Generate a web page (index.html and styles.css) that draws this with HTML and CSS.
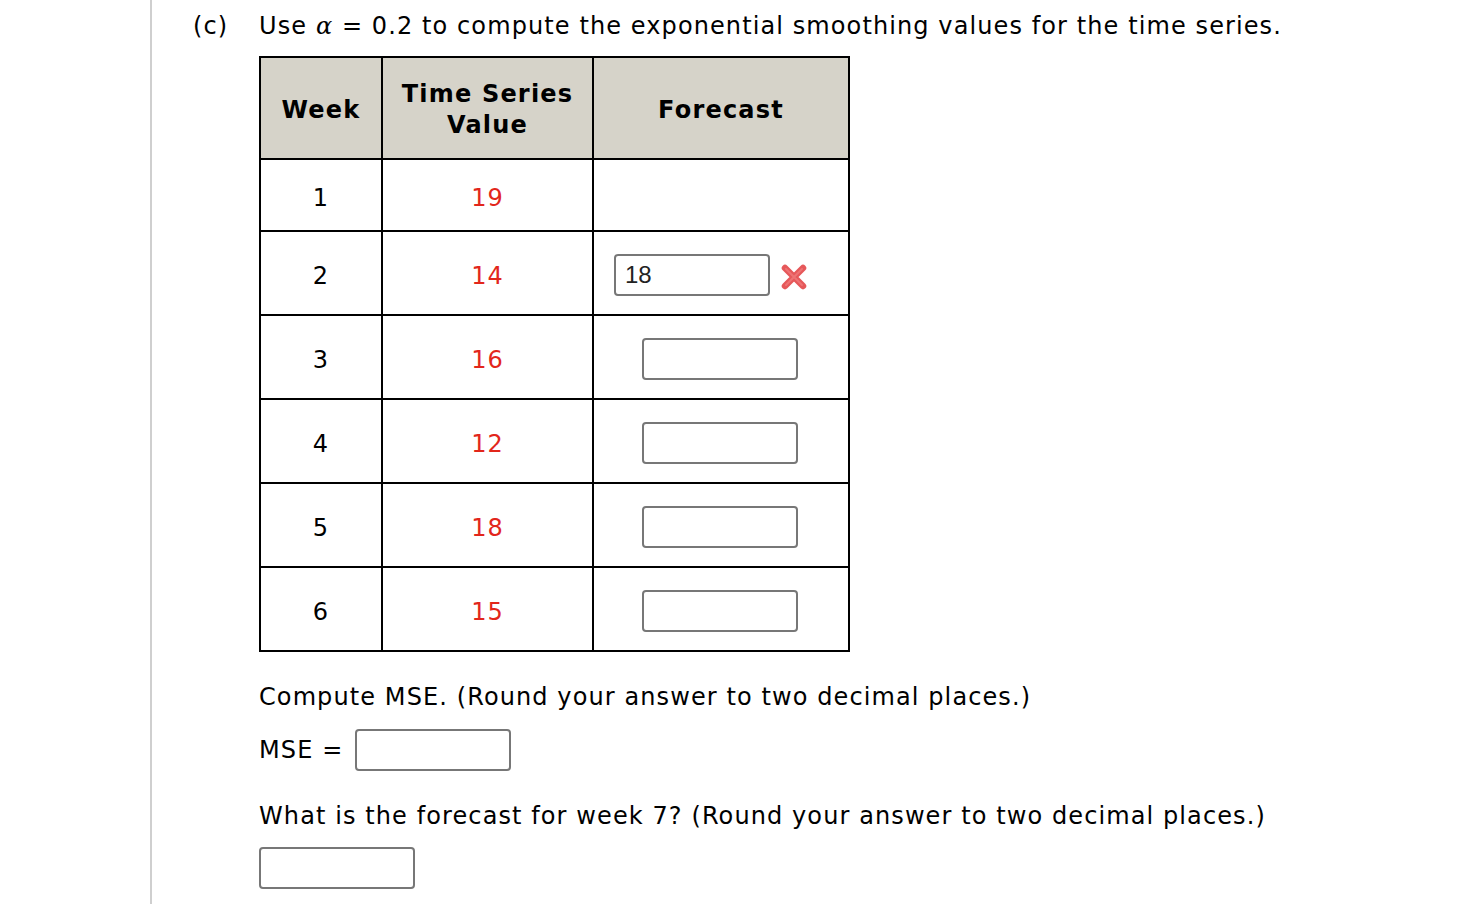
FILE: index.html
```html
<!DOCTYPE html>
<html>
<head>
<meta charset="utf-8">
<link rel="stylesheet" href="styles.css">
</head>
<body>
<div class="page">
  <div class="part">
    <div class="label">(c)</div>
    <div class="body">
      <p class="intro">Use <span class="alpha">α</span> = 0.2 to compute the exponential smoothing values for the time series.</p>
      <table class="grid">
        <tr class="head">
          <th class="c1">Week</th>
          <th class="c2">Time Series<br>Value</th>
          <th class="c3">Forecast</th>
        </tr>
        <tr class="first"><td class="num">1</td><td class="num val">19</td><td></td></tr>
        <tr><td class="num">2</td><td class="num val">14</td><td class="fc"><div class="answered"><span class="box filled">18</span><svg class="wrong" width="30" height="30" viewBox="0 0 30 30"><path d="M6 6 L24 24 M24 6 L6 24" stroke="#e6585a" stroke-width="6.5" stroke-linecap="round"/><path d="M7 7 L23 23 M23 7 L7 23" stroke="#ee7374" stroke-width="2" stroke-linecap="round"/></svg></div></td></tr>
        <tr><td class="num">3</td><td class="num val">16</td><td class="fc"><span class="box"></span></td></tr>
        <tr><td class="num">4</td><td class="num val">12</td><td class="fc"><span class="box"></span></td></tr>
        <tr><td class="num">5</td><td class="num val">18</td><td class="fc"><span class="box"></span></td></tr>
        <tr><td class="num">6</td><td class="num val">15</td><td class="fc"><span class="box"></span></td></tr>
      </table>
      <p class="q mse-q">Compute MSE. (Round your answer to two decimal places.)</p>
      <div class="mse">MSE = <span class="box"></span></div>
      <p class="q week-q">What is the forecast for week 7? (Round your answer to two decimal places.)</p>
      <span class="box"></span>
    </div>
  </div>
</div>
</body>
</html>
```

FILE: styles.css
```css
html, body {
  margin: 0;
  padding: 0;
  background: #fff;
}
body {
  font-family: "DejaVu Sans", Verdana, sans-serif;
  font-size: 24px;
  letter-spacing: 1.1px;
  color: #000;
}
.page {
  margin-left: 150px;
  border-left: 2px solid #cfcfcf;
  min-height: 904px;
  padding-left: 41px;
  box-sizing: border-box;
}
.part {
  display: flex;
}
.label {
  width: 66px;
  padding-top: 11px;
  line-height: 30px;
}
.body {
  flex: 1;
}
.intro {
  margin: 0;
  padding-top: 11px;
  line-height: 30px;
}
.alpha {
  font-family: "DejaVu Serif", serif;
  font-style: italic;
}
.grid {
  border-collapse: collapse;
  margin-top: 15px;
}
.grid th, .grid td {
  border: 2px solid #000;
  text-align: center;
  padding: 0;
}
.grid th {
  background: #d6d3c9;
  font-weight: bold;
  letter-spacing: 1.2px;
  height: 96px;
  line-height: 31px;
  padding-top: 4px;
}
.c1 { width: 120px; }
.c2 { width: 209px; }
.c3 { width: 254px; }
.grid td {
  height: 82px;
}
.grid td.num {
  height: 76px;
  padding-top: 6px;
}
.grid td.fc {
  height: 79px;
  padding-top: 3px;
}
.grid tr.first td {
  height: 70px;
}
.grid tr.first td.num {
  height: 64px;
}
.val {
  color: #e2261b;
}
.box {
  display: inline-block;
  width: 156px;
  height: 42px;
  box-sizing: border-box;
  border: 2px solid #777;
  border-radius: 4px;
  vertical-align: middle;
  background: #fff;
  letter-spacing: 0;
}
.grid td.fc > .box {
  margin-left: -2px;
}
.answered {
  display: flex;
  align-items: center;
  padding-left: 20px;
}
.box.filled {
  font-family: "Liberation Sans", Arial, sans-serif;
  text-align: left;
  padding-left: 9px;
  line-height: 37px;
  color: #222;
}
.wrong {
  margin-left: 9px;
  margin-top: 4px;
}
.q {
  margin: 0;
  line-height: 30px;
}
.mse-q {
  margin-top: 30px;
}
.mse {
  margin-top: 17px;
  display: flex;
  align-items: center;
  gap: 12px;
}
.week-q {
  margin-top: 30px;
  margin-bottom: 16px;
}
```
